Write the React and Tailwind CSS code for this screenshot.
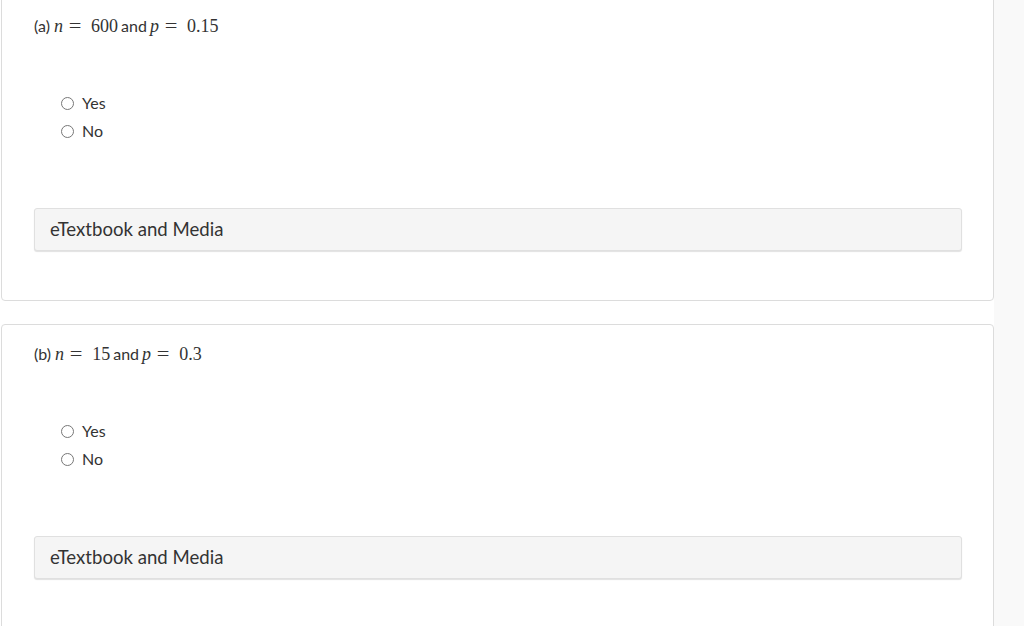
const lato = { fontFamily: 'Lato, "Noto Sans", sans-serif' };
const serif = { fontFamily: '"Liberation Serif", "DejaVu Serif", serif' };

function Radio({ label }) {
  return (
    <label className="flex items-center h-7 text-[16px] text-[#333]">
      <span className="w-[13px] h-[13px] rounded-full border border-[#777] bg-white mr-[8px]" />
      {label}
    </label>
  );
}

function Eq({ v, val }) {
  return (
    <span className="text-[18px]" style={serif}>
      <i>{v}</i>
      <span className="inline-block mx-[7px] scale-x-125">=</span>
      <span className="ml-[4px]">{val}</span>
    </span>
  );
}

function Part({ tag, n, p, first }) {
  return (
    <div
      className={`border border-[#dcdcdc] rounded-[4px] bg-white pl-[32px] pr-[31px] pt-[19px] ${first ? 'pb-[49px]' : 'pb-[60px]'}`}
    >
      <div className="text-[16px] text-[#333] h-5 flex items-center">
        <span className="mr-[4px]">({tag})</span>
        <Eq v="n" val={n} />
        <span className="mx-[3px]">and</span>
        <Eq v="p" val={p} />
      </div>
      <div className="mt-[53px] pl-[27px]">
        <Radio label="Yes" />
        <Radio label="No" />
      </div>
      <div className="mt-[63px] h-[43px] flex items-center px-[15px] bg-[#f5f5f5] border border-[#e0e0e0] rounded-[3px] shadow-[0_1px_1px_rgba(0,0,0,0.12)] text-[18.6px] text-[#333]">
        eTextbook and Media
      </div>
    </div>
  );
}

export default function App() {
  return (
    <div className="flex min-h-[626px] h-[626px] overflow-hidden bg-white" style={lato}>
      <div className="w-[994px] pl-[1px] bg-white">
        <div className="-mt-[4px]">
          <Part tag="a" n="600" p="0.15" first />
        </div>
        <div className="mt-[23px]">
          <Part tag="b" n="15" p="0.3" />
        </div>
      </div>
      <div className="flex-1 bg-[#f9f9f9]" />
    </div>
  );
}
